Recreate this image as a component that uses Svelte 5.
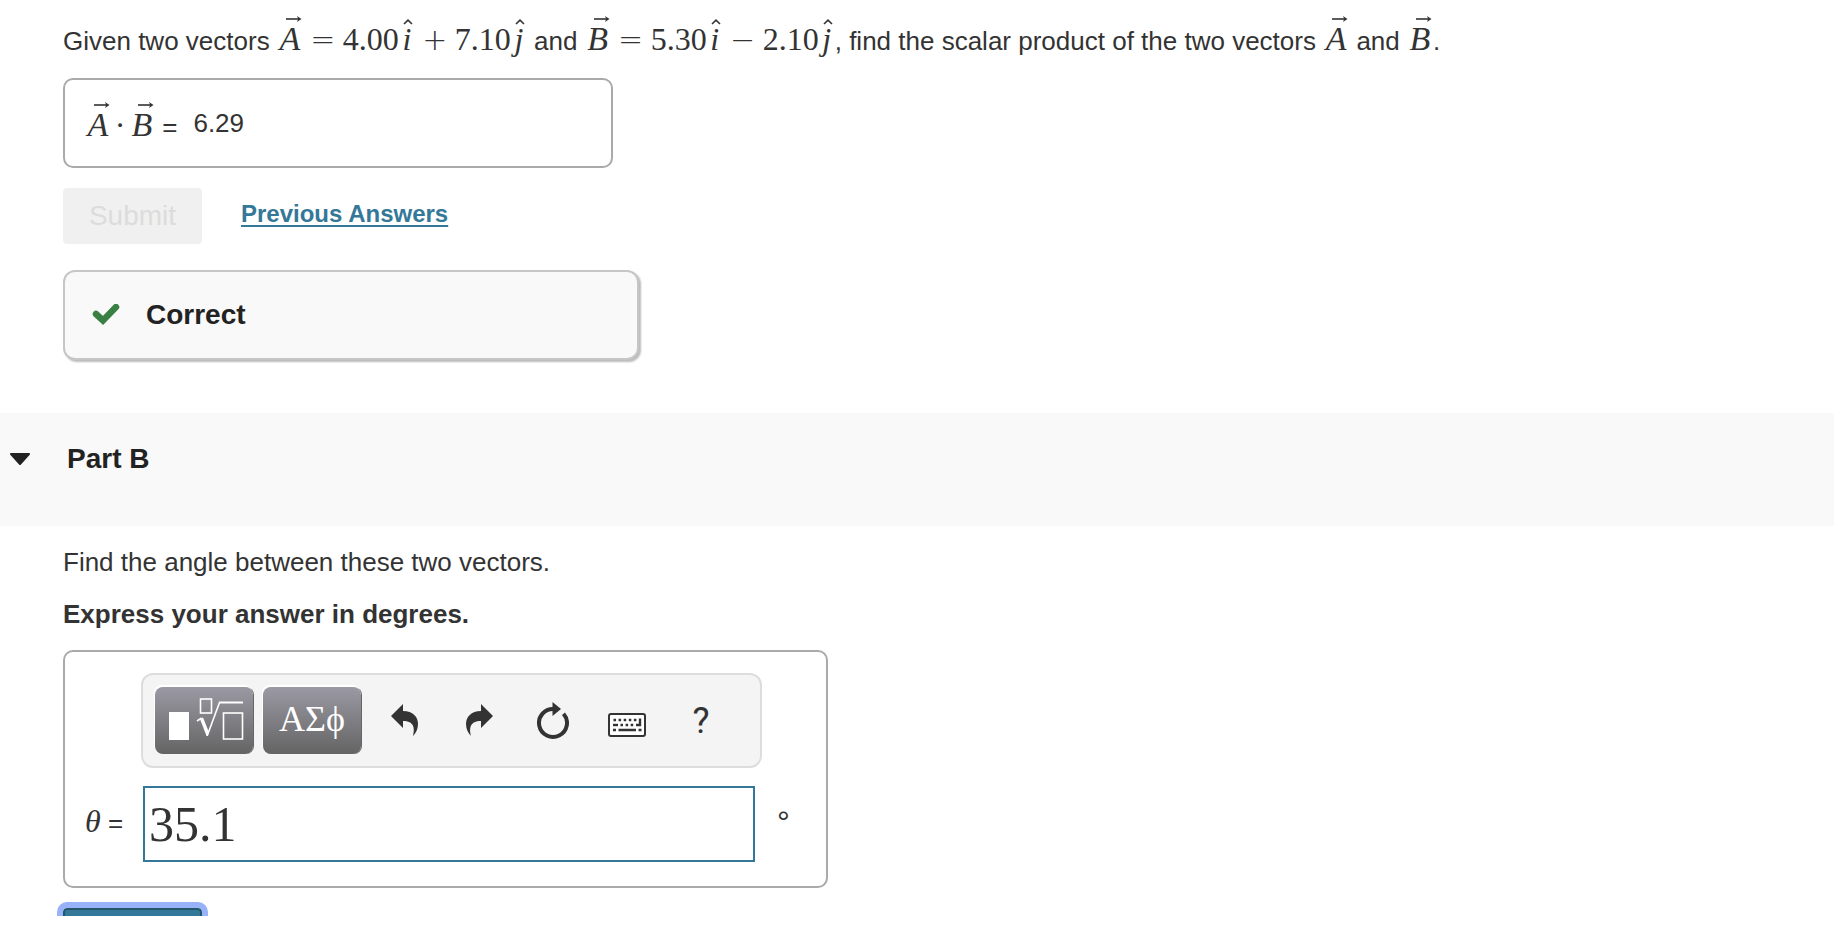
<script>
    let partBOpen = $state(true);
    let productAnswer = "6.29";
    let angleAnswer = $state("35.1");
</script>

<!-- Letter with a vector arrow above it -->
{#snippet vec(letter)}
    <span class="vec">
        <i>{letter}</i>
        <svg class="arrow" viewBox="0 0 16 8" aria-hidden="true">
            <path d="M0 4H13" stroke="currentColor" stroke-width="1.6" />
            <path d="M11 1L15.5 4L11 7L12.2 4Z" fill="currentColor" />
        </svg>
    </span>
{/snippet}

<!-- Unit vector letter with a hat -->
{#snippet hat(letter)}
    <span class="unit">
        <i>{letter}</i>
        <svg class="caret" viewBox="0 0 10 6" aria-hidden="true">
            <path
                d="M1 5L5 1.2L9 5"
                fill="none"
                stroke="currentColor"
                stroke-width="1.6"
            />
        </svg>
    </span>
{/snippet}

<main>
    <section class="content partA">
        <p class="question">
            Given two vectors <span class="math">
                {@render vec("A")}
                <span class="op">=</span>
                <span>4.00</span>
                {@render hat("i")}
                <span class="op">+</span>
                <span>7.10</span>
                {@render hat("j")}
            </span>
            and <span class="math">
                {@render vec("B")}
                <span class="op">=</span>
                <span>5.30</span>
                {@render hat("i")}
                <span class="op">−</span>
                <span>2.10</span>
                {@render hat("j")}
            </span>, find the scalar product of the two vectors
            <span class="math">{@render vec("A")}</span>
            and <span class="math">{@render vec("B")}</span>.
        </p>

        <div class="box answerA">
            <span class="labelA">
                <span class="math">
                    {@render vec("A")}
                    <span class="dot">·</span>
                    {@render vec("B")}
                </span>
                <span>=</span>
            </span>
            <span>{productAnswer}</span>
        </div>

        <div class="actions">
            <button class="submit" disabled>Submit</button>
            <a class="previous" href="#previous">Previous Answers</a>
        </div>

        <div class="feedback" role="status">
            <svg class="check" viewBox="0 0 28 22" aria-hidden="true">
                <path
                    d="M4 10L11 16.5L24 3"
                    fill="none"
                    stroke="#3a8043"
                    stroke-width="6.5"
                    stroke-linecap="round"
                />
            </svg>
            <strong>Correct</strong>
        </div>
    </section>

    <h2 class="partHeader">
        <button
            class="toggle"
            aria-expanded={partBOpen}
            onclick={() => (partBOpen = !partBOpen)}
        >
            <svg
                class="triangle"
                class:closed={!partBOpen}
                viewBox="0 0 20 12"
                aria-hidden="true"
            >
                <path
                    d="M1 1H19L10 11Z"
                    fill="#222"
                    stroke="#222"
                    stroke-width="2"
                    stroke-linejoin="round"
                />
            </svg>
            Part B
        </button>
    </h2>

    {#if partBOpen}
        <section class="content partB">
            <p>Find the angle between these two vectors.</p>
            <p class="instruction">Express your answer in degrees.</p>

            <div class="box answerB">
                <div class="toolbar" role="toolbar" aria-label="Equation tools">
                    <button class="template" aria-label="Templates">
                        <svg width="98" height="67" viewBox="0 0 98 67">
                            <rect
                                x="14"
                                y="25"
                                width="20"
                                height="28"
                                fill="#fff"
                            />
                            <g fill="none" stroke="#fff" stroke-width="1.6">
                                <rect x="45.5" y="12" width="11" height="14" />
                                <rect x="68.5" y="26" width="19" height="26" />
                                <path d="M64 15.5H88" stroke-width="2" />
                                <path d="M42 34L46.5 31" />
                                <path d="M52.5 48L64.5 15.5" />
                            </g>
                            <path
                                d="M45 32L48 30.5L53.5 44L53 49H51.5Z"
                                fill="#fff"
                            />
                        </svg>
                    </button>
                    <button class="template" aria-label="Symbols">ΑΣϕ</button>

                    <div class="tools">
                        <button aria-label="Undo">
                            <svg width="28" height="34" viewBox="0 0 28 34">
                                <path
                                    d="M0 12L12 0V7C22 7 27 13 27 20C27 25 25 29 22 32C24 24 23 17 12 17V24Z"
                                    fill="#333"
                                />
                            </svg>
                        </button>
                        <button aria-label="Redo">
                            <svg width="28" height="34" viewBox="0 0 28 34">
                                <path
                                    d="M28 12L16 0V7C6 7 1 13 1 20C1 25 3 29 6 32C4 24 5 17 16 17V24Z"
                                    fill="#333"
                                />
                            </svg>
                        </button>
                        <button aria-label="Reset">
                            <svg width="32" height="38" viewBox="0 0 32 38">
                                <path
                                    d="M17 7A14 14 0 1 0 26.5 11.7"
                                    fill="none"
                                    stroke="#333"
                                    stroke-width="4"
                                />
                                <path d="M15.5 0L24 7L15.5 14Z" fill="#333" />
                            </svg>
                        </button>
                        <button class="low" aria-label="Keyboard shortcuts">
                            <svg width="38" height="24" viewBox="0 0 38 24">
                                <rect
                                    x="1"
                                    y="1"
                                    width="36"
                                    height="22"
                                    rx="2"
                                    fill="#fff"
                                    stroke="#333"
                                    stroke-width="2"
                                />
                                <g
                                    fill="none"
                                    stroke="#333"
                                    stroke-width="2.4"
                                >
                                    <path
                                        d="M5.5 7H30"
                                        stroke-dasharray="2.5 2.6"
                                    />
                                    <path d="M32 5.5V12H28" />
                                    <path d="M5 12H10" />
                                    <path
                                        d="M12.5 12H27"
                                        stroke-dasharray="2.5 2.6"
                                    />
                                    <path d="M5 17H8M10.5 17H28M30.5 17H33.5" />
                                </g>
                            </svg>
                        </button>
                        <button class="help" aria-label="Help">?</button>
                    </div>
                </div>

                <div class="entry">
                    <label for="theta"><i>θ</i> =</label>
                    <input id="theta" type="text" bind:value={angleAnswer} />
                    <span class="degree">°</span>
                </div>
            </div>

            <button class="submit active" aria-label="Submit"></button>
        </section>
    {/if}
</main>

<style>
    :global(body) {
        margin: 0;
        background: #fff;
    }
    * {
        box-sizing: border-box;
    }
    main {
        height: calc(100vh - 34px);
        overflow: hidden;
        font-family: "Liberation Sans", Arial, sans-serif;
        font-size: 26px;
        line-height: 40px;
        color: #333;
    }
    button {
        font: inherit;
        color: inherit;
        border: none;
        background: none;
        padding: 0;
        cursor: pointer;
    }
    p {
        margin: 0;
    }
    .content {
        padding-left: 63px;
    }
    .partA {
        padding-top: 21px;
        padding-bottom: 53px;
    }
    .partB {
        padding-top: 16px;
    }

    /* Math */
    .math {
        display: inline-flex;
        align-items: baseline;
        font-family: "Liberation Serif", "Times New Roman", serif;
        font-size: 32px;
        line-height: 32px;
    }
    .vec,
    .unit {
        position: relative;
        display: inline-block;
        width: 26px;
        text-align: center;
    }
    .vec {
        font-size: 34px;
    }
    .unit {
        width: 16px;
    }
    .arrow {
        position: absolute;
        top: -8px;
        left: 9px;
        width: 16px;
        height: 8px;
    }
    .caret {
        position: absolute;
        top: -4px;
        left: 4px;
        width: 10px;
        height: 6px;
    }
    .op {
        width: 40px;
        font-family: "DejaVu Sans", sans-serif;
        font-size: 30px;
        font-weight: 200;
        text-align: center;
    }
    .dot {
        width: 18px;
        text-align: center;
    }

    .box {
        max-width: 100%;
        border: 2px solid #aaa;
        border-radius: 10px;
    }
    .answerA {
        display: flex;
        align-items: center;
        gap: 16px;
        width: 550px;
        height: 90px;
        margin-top: 17px;
        padding-left: 20px;
    }
    .labelA {
        padding-top: 8px;
    }

    .actions {
        display: flex;
        align-items: center;
        gap: 39px;
        margin: 20px 0 26px;
    }
    .submit {
        width: 139px;
        height: 56px;
        border-radius: 4px;
        background: #f0f0f0;
        color: #dcdcdc;
        font-size: 28px;
    }
    .previous {
        padding-bottom: 4px;
        color: #347899;
        font-size: 24px;
        font-weight: bold;
        text-underline-offset: 3px;
        text-decoration-thickness: 2px;
    }
    .feedback {
        display: flex;
        align-items: center;
        gap: 26px;
        width: 576px;
        max-width: 100%;
        height: 90px;
        padding-left: 27px;
        border: 2px solid #c6c6c6;
        border-radius: 12px;
        background: #f9f9f9;
        box-shadow: 2px 2px 2px #bbb;
        color: #222;
        font-size: 28px;
    }
    .check {
        width: 28px;
        height: 22px;
    }

    .partHeader {
        margin: 0;
        padding: 26px 10px 47px;
        background: #f9f9f9;
        font-size: 28px;
    }
    .toggle {
        display: flex;
        align-items: center;
        gap: 37px;
        color: #222;
    }
    .triangle {
        width: 20px;
        height: 12px;
    }
    .closed {
        transform: rotate(-90deg);
    }
    .instruction {
        margin: 12px 0 16px;
        font-weight: bold;
    }

    .answerB {
        width: 765px;
        padding: 21px 0 24px;
    }
    .toolbar {
        display: flex;
        align-items: center;
        gap: 10px;
        height: 95px;
        margin: 0 64px 18px 76px;
        padding-left: 12px;
        border: 2px solid #ddd;
        border-radius: 12px;
        background: #f4f4f4;
    }
    .template {
        width: 98px;
        height: 67px;
        padding-bottom: 4px;
        border-radius: 8px;
        background: linear-gradient(#9b99a3, #646464);
        box-shadow:
            -1px -2px 0 #fff,
            1px 0 0 #666;
        color: #fff;
        font-family: "Liberation Serif", "Times New Roman", serif;
        font-size: 36px;
    }
    .template:first-child {
        padding-bottom: 0;
    }
    .template svg {
        display: block;
    }
    .tools {
        display: flex;
        margin-left: -3px;
    }
    .tools button {
        display: flex;
        align-items: center;
        justify-content: center;
        width: 74px;
        height: 67px;
    }
    .tools .low {
        padding-top: 8px;
    }
    .tools .help {
        font-family: Roboto, sans-serif;
        font-size: 36px;
    }
    .entry {
        display: flex;
        align-items: center;
    }
    .entry label {
        width: 78px;
        padding-left: 20px;
        padding-bottom: 4px;
    }
    .entry i {
        font-family: "Liberation Serif", "Times New Roman", serif;
        font-size: 32px;
    }
    .entry input {
        width: 612px;
        height: 76px;
        padding: 0 4px;
        border: 2px solid #347899;
        outline: none;
        background: #fff;
        color: #333;
        font-family: "Liberation Serif", "Times New Roman", serif;
        font-size: 50px;
    }
    .degree {
        padding-left: 22px;
        padding-bottom: 4px;
        font-size: 32px;
    }
    .active {
        display: block;
        margin-top: 20px;
        border: 2px solid #23566b;
        background: #347899;
        outline: 6px solid #97b2f8;
    }
</style>
